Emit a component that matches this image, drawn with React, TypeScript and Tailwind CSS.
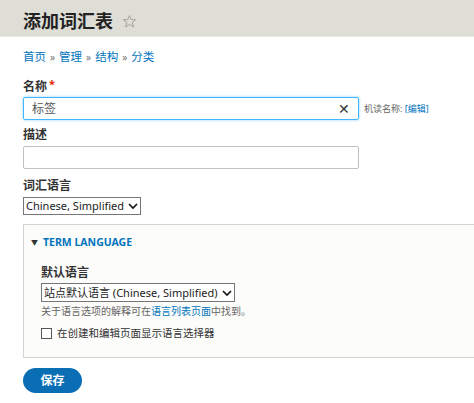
import React from "react"

const font = { fontFamily: '"Noto Sans", "Noto Sans CJK SC", sans-serif' }

function Chevron() {
    return (
        <svg width="10" height="8" viewBox="0 0 10 8" className="ml-1 shrink-0">
            <path d="M1 2 L5 6 L9 2" fill="none" stroke="#111" strokeWidth="1.6" />
        </svg>
    )
}

export default function App() {
    return (
        <div className="w-[474px] h-[403px] overflow-hidden bg-white text-[#333]" style={font}>
            {/* 标题栏 */}
            <div className="h-[37px] bg-[#deddd6] border-b border-[#ebebe6] flex items-center pl-[23px] pt-[6px]">
                <h1 className="text-[18px] font-bold text-[#222] leading-none">添加词汇表</h1>
                <svg width="15" height="15" viewBox="0 0 24 24" className="ml-[9px]">
                    <path
                        d="M12 2.5 L14.8 9 L21.8 9.3 L16.3 13.8 L18.2 20.7 L12 16.8 L5.8 20.7 L7.7 13.8 L2.2 9.3 L9.2 9 Z"
                        fill="none"
                        stroke="#9a9a94"
                        strokeWidth="1.4"
                    />
                </svg>
            </div>

            <div className="pl-[23px]">
                {/* 面包屑 */}
                <div className="mt-[14px] h-[12px] text-[11.5px] text-[#0074bd] leading-[12px] flex items-center gap-[4px]">
                    <span>首页</span>
                    <span className="text-[#777] text-[10px]">»</span>
                    <span>管理</span>
                    <span className="text-[#777] text-[10px]">»</span>
                    <span>结构</span>
                    <span className="text-[#777] text-[10px]">»</span>
                    <span>分类</span>
                </div>

                {/* 名称 */}
                <div className="mt-[18px] h-[12px] text-[12px] font-bold leading-[12px] flex">
                    名称<span className="text-[#e62600] text-[11px] ml-[2px] -mt-[3px]">*</span>
                </div>
                <div className="mt-[4px] flex items-center">
                    <div className="w-[336px] h-[23px] border border-[#40b6ff] rounded-[2px] shadow-[0_0_3px_#8fd0ff] flex items-center px-[8px] text-[12px] text-[#555]">
                        <span className="flex-1">标签</span>
                        <span className="text-[14px] text-[#333] leading-none">✕</span>
                    </div>
                    <span className="ml-[5px] text-[9px] text-[#666]">
                        机读名称: <span className="text-[#0074bd]">[编辑]</span>
                    </span>
                </div>

                {/* 描述 */}
                <div className="mt-[9px] h-[12px] text-[12px] font-bold leading-[12px]">描述</div>
                <div className="mt-[5px] w-[336px] h-[23px] border border-[#c0c0c0] rounded-[2px] bg-white" />

                {/* 词汇语言 */}
                <div className="mt-[11px] h-[12px] text-[12px] font-bold leading-[12px]">词汇语言</div>
                <div className="mt-[2px] inline-flex items-center h-[18px] border border-[#767676] px-[2px] text-[11px] text-[#222] leading-none">
                    Chinese, Simplified
                    <Chevron />
                </div>

                {/* 字段集 */}
                <div className="mt-[8px] border border-[#d4d4d0] border-r-0 bg-[#fcfcfa] w-[460px] h-[134px] pl-[7px] pt-[12px]">
                    <div className="h-[11px] flex items-center text-[10.5px] font-bold text-[#0074bd] leading-[11px]">
                        <span className="text-[7px] mr-[5px] text-[#333]">▼</span>
                        TERM LANGUAGE
                    </div>
                    <div className="pl-[10px] mt-[19px]">
                        <div className="h-[12px] text-[12px] font-bold leading-[12px]">默认语言</div>
                        <div className="mt-[3px] inline-flex items-center h-[19px] border border-[#767676] bg-white px-[2px] text-[11px] text-[#222] leading-none">
                            站点默认语言 (Chinese, Simplified)
                            <Chevron />
                        </div>
                        <div className="mt-[2px] h-[13px] text-[10px] text-[#666] leading-[13px]">
                            关于语言选项的解释可在<span className="text-[#0074bd]">语言列表页面</span>中找到。
                        </div>
                        <div className="mt-[8px] h-[14px] flex items-center text-[10.5px] text-[#333] leading-none">
                            <span className="w-[11px] h-[11px] border border-[#555] bg-white mr-[5px]" />
                            在创建和编辑页面显示语言选择器
                        </div>
                    </div>
                </div>

                {/* 保存 */}
                <button className="mt-[10px] w-[59px] h-[25px] rounded-full bg-[#0a6eb4] text-white text-[12px] font-bold leading-none">
                    保存
                </button>
            </div>
        </div>
    )
}
